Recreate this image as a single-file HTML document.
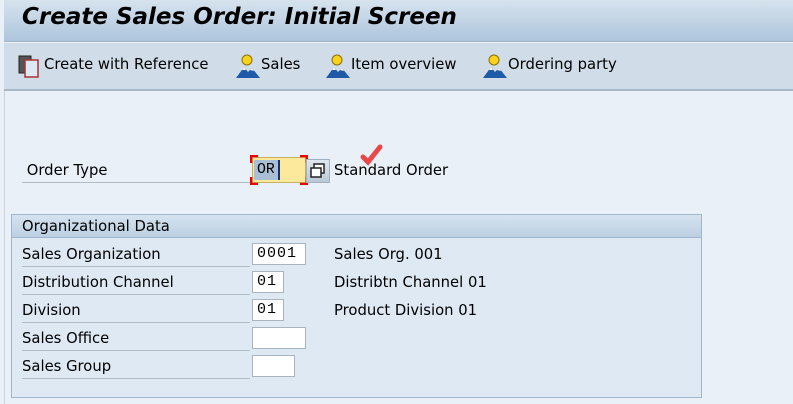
<html><head><style>
body{margin:0;width:793px;height:404px;overflow:hidden;background:#e9f0f7;font-family:Tahoma,"DejaVu Sans","Liberation Sans",sans-serif;font-size:14.8px;color:#000;position:relative}
.a{position:absolute}
.title{left:4px;top:0;width:789px;height:41px;background:linear-gradient(#d6e3ee,#aec5dc);border-bottom:1px solid #9fb3c6}
.title span{position:absolute;left:18px;top:4px;font-family:"DejaVu Sans",sans-serif;font-weight:bold;font-style:italic;font-size:23px;color:#000}
.tb{left:4px;top:42px;width:789px;height:46px;background:#d0dde8;border-top:1px solid #eef3f8;border-bottom:2px solid #a9b8c6}
.vl{left:4px;top:0;width:1px;height:404px;background:#c9d4de}
.lbl{position:absolute;left:22px;width:228px;border-bottom:1px solid #b2bcc6;height:22px;line-height:22px}
.inp{position:absolute;height:22px;background:#fff;border:1px solid #aab4be;box-sizing:border-box;font-family:"Liberation Mono",monospace;font-size:15px;line-height:20px;padding-left:4px;letter-spacing:1px}
.txt{position:absolute;left:334px;line-height:22px}
</style></head><body>
<div class="a vl"></div>
<div class="a title"><span>Create Sales Order: Initial Screen</span></div>
<div class="a tb"></div>
<svg class="a" style="left:18px;top:55px" width="24" height="24"><rect x="1" y="1" width="12" height="17" fill="#555" stroke="#222"/><rect x="7" y="5" width="13" height="17" fill="#dde9f5" stroke="#a33" stroke-width="1.5"/></svg>
<div class="a" style="left:44px;top:56px">Create with Reference</div>
<svg class="a" style="left:235px;top:53px" width="26" height="26"><circle cx="12" cy="7" r="5" fill="#f8d21c" stroke="#8a7000"/><path d="M1 25 L9 14 L13 19 L17 15 L25 25Z" fill="#1f5aa8"/><path d="M7 17 L9 14 L11 17Z M15 17 L17 15 L19 18Z" fill="#fff"/></svg>
<div class="a" style="left:261px;top:56px">Sales</div>
<svg class="a" style="left:325px;top:53px" width="26" height="26"><circle cx="12" cy="7" r="5" fill="#f8d21c" stroke="#8a7000"/><path d="M1 25 L9 14 L13 19 L17 15 L25 25Z" fill="#1f5aa8"/><path d="M7 17 L9 14 L11 17Z M15 17 L17 15 L19 18Z" fill="#fff"/></svg>
<div class="a" style="left:351px;top:56px">Item overview</div>
<svg class="a" style="left:482px;top:53px" width="26" height="26"><circle cx="12" cy="7" r="5" fill="#f8d21c" stroke="#8a7000"/><path d="M1 25 L9 14 L13 19 L17 15 L25 25Z" fill="#1f5aa8"/><path d="M7 17 L9 14 L11 17Z M15 17 L17 15 L19 18Z" fill="#fff"/></svg>
<div class="a" style="left:508px;top:56px">Ordering party</div>
<div class="lbl" style="top:160px;width:228px">&nbsp;Order Type</div>
<div class="a" style="left:252px;top:157px;width:54px;height:26px;background:#fde99b;border:1px solid #c8b060;box-sizing:border-box"></div>
<div class="a" style="left:254px;top:160px;width:26px;height:20px;background:#a9bfd6;font-family:'Liberation Mono',monospace;line-height:20px;padding-left:3px;box-sizing:border-box;border-right:2px solid #1b2f6b">OR</div>
<svg class="a" style="left:250px;top:155px" width="58" height="30"><path d="M1 8V1H8M50 1H57V8M1 22V29H8M50 29H57V22" fill="none" stroke="#e00" stroke-width="2.5"/></svg>
<div class="a" style="left:306px;top:159px;width:24px;height:24px;background:linear-gradient(#dfe7ef,#b9c8d6);border:1px solid #9fb0c0;box-sizing:border-box"></div>
<svg class="a" style="left:309px;top:162px" width="18" height="18"><rect x="5" y="2" width="10" height="9" fill="#fff" stroke="#222" stroke-width="1.5"/><rect x="2" y="6" width="10" height="9" fill="#fff" stroke="#222" stroke-width="1.5"/></svg>
<div class="a" style="left:334px;top:160px;line-height:22px">Standard Order</div>
<svg class="a" style="left:358px;top:143px" width="26" height="24"><path d="M5 14 L10 19 L22 4" fill="none" stroke="#e8484a" stroke-width="5" stroke-linecap="round"/></svg>
<div class="a" style="left:11px;top:214px;width:691px;height:184px;border:1px solid #9fb6cc;box-sizing:border-box;background:#dee9f4"></div>
<div class="a" style="left:12px;top:215px;width:689px;height:23px;background:linear-gradient(#d6e3ef,#bcd0e3);border-bottom:1px solid #9fb6cc;line-height:23px;padding-left:10px;box-sizing:border-box">Organizational Data</div>
<div class="lbl" style="top:244px">Sales Organization</div>
<div class="lbl" style="top:272px">Distribution Channel</div>
<div class="lbl" style="top:300px">Division</div>
<div class="lbl" style="top:328px">Sales Office</div>
<div class="lbl" style="top:356px">Sales Group</div>
<div class="inp" style="left:252px;top:243px;width:54px">0001</div>
<div class="inp" style="left:252px;top:271px;width:32px">01</div>
<div class="inp" style="left:252px;top:299px;width:32px">01</div>
<div class="inp" style="left:252px;top:327px;width:54px"></div>
<div class="inp" style="left:252px;top:355px;width:43px"></div>
<div class="txt" style="top:244px">Sales Org. 001</div>
<div class="txt" style="top:272px">Distribtn Channel 01</div>
<div class="txt" style="top:300px">Product Division 01</div>
</body></html>
